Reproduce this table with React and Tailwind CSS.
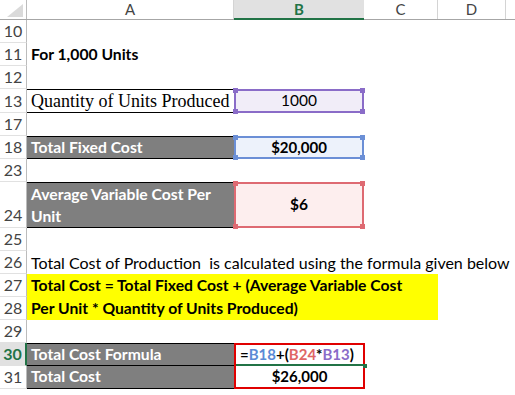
import React from 'react'

const font = { fontFamily: 'Lato, "Open Sans", sans-serif' }

function Handle({ className }) {
  return <div className={`absolute w-[5px] h-[5px] ${className}`} />
}

function RowNum({ n, h = 'h-[23px]', active = false, align = 'items-center' }) {
  return (
    <div
      className={`w-[27px] shrink-0 ${h} flex ${align} justify-center border-b border-[#e1e1e1] ${
        active ? 'bg-[#e1e1e1] text-[#217346] font-bold border-r-2 border-r-[#217346]' : 'border-r border-r-[#bcbcbc] text-[#444]'
      } text-[16px]`}
    >
      {n}
    </div>
  )
}

function Row({ n, h = 'h-[23px]', active, numAlign, children }) {
  return (
    <div className={`flex ${h}`}>
      <RowNum n={n} h={h} active={active} align={numAlign} />
      {children}
    </div>
  )
}

export default function App() {
  return (
    <div className="w-[515px] h-[395px] overflow-hidden bg-white text-black" style={font}>
      {/* column headers */}
      <div className="flex h-[20px] border-b border-[#a6a6a6] text-[15px] text-[#444]">
        <div className="w-[27px] shrink-0 border-r border-[#bcbcbc] relative">
          <svg className="absolute left-[7px] top-[4px]" width="16" height="13">
            <polygon points="16,0 16,13 0,13" fill="#dadada" />
          </svg>
        </div>
        <div className="w-[207px] shrink-0 flex items-center justify-center border-r border-[#d4d4d4]">A</div>
        <div className="w-[130px] shrink-0 flex items-center justify-center bg-[#e1e1e1] border-b-2 border-[#217346] text-[#217346] font-bold -mb-px">
          B
        </div>
        <div className="w-[74px] shrink-0 flex items-center justify-center border-r border-[#d4d4d4]">C</div>
        <div className="w-[68px] shrink-0 flex items-center justify-center border-r border-[#d4d4d4]">D</div>
        <div className="flex-1" />
      </div>

      <Row n="10" />
      <Row n="11">
        <div className="pl-[4px] flex items-center font-bold text-[15.7px] whitespace-nowrap">For 1,000 Units</div>
      </Row>
      <Row n="12" />
      <Row n="13" h="h-[24px]">
        <div className="w-[207px] shrink-0 border-y border-black flex items-center pl-[4px] whitespace-nowrap text-[18px]" style={{ fontFamily: '"Liberation Serif", serif' }}>
          Quantity of Units Produced
        </div>
        <div className="relative w-[130px] shrink-0 bg-[#f1edf8] border-2 border-[#8a6cc8] flex items-center justify-center text-[15.5px]">
          1000
          <Handle className="bg-[#8a6cc8] -left-[3px] -top-[3px]" />
          <Handle className="bg-[#8a6cc8] -right-[3px] -top-[3px]" />
          <Handle className="bg-[#8a6cc8] -left-[3px] -bottom-[3px]" />
          <Handle className="bg-[#8a6cc8] -right-[3px] -bottom-[3px]" />
        </div>
      </Row>
      <Row n="17" />
      <Row n="18">
        <div className="w-[207px] shrink-0 bg-[#7f7f7f] border-y border-black flex items-center pl-[4px] text-white font-bold text-[15.7px]">
          Total Fixed Cost
        </div>
        <div className="relative w-[130px] shrink-0 bg-[#edf2fb] border-2 border-[#6b8fd6] flex items-center justify-center font-bold text-[15px]">
          $20,000
          <Handle className="bg-[#6b8fd6] -left-[3px] -top-[3px]" />
          <Handle className="bg-[#6b8fd6] -right-[3px] -top-[3px]" />
          <Handle className="bg-[#6b8fd6] -left-[3px] -bottom-[3px]" />
          <Handle className="bg-[#6b8fd6] -right-[3px] -bottom-[3px]" />
        </div>
      </Row>
      <Row n="23" />
      <Row n="24" h="h-[46px]" numAlign="items-end">
        <div className="w-[207px] shrink-0 bg-[#7f7f7f] border-y border-black flex flex-col justify-center pl-[4px] text-white font-bold text-[15.7px] leading-[22px]">
          <span>Average Variable Cost Per</span>
          <span>Unit</span>
        </div>
        <div className="relative w-[130px] shrink-0 bg-[#fdeeee] border-2 border-[#de6a72] flex items-center justify-center font-bold text-[15.5px]">
          $6
          <Handle className="bg-[#de6a72] -left-[3px] -top-[3px]" />
          <Handle className="bg-[#de6a72] -right-[3px] -top-[3px]" />
          <Handle className="bg-[#de6a72] -left-[3px] -bottom-[3px]" />
          <Handle className="bg-[#de6a72] -right-[3px] -bottom-[3px]" />
        </div>
      </Row>
      <Row n="25" />
      <Row n="26">
        <div className="pl-[4px] flex items-center text-[16px] whitespace-nowrap">
          Total Cost of Production&nbsp; is calculated using the formula given below
        </div>
      </Row>

      {/* merged yellow block rows 27-28 */}
      <div className="flex">
        <div className="flex flex-col">
          <RowNum n="27" />
          <RowNum n="28" />
        </div>
        <div className="w-[411px] shrink-0 bg-[#ffff00] pl-[4px] font-bold text-[15.7px] leading-[23px]">
          <div>Total Cost = Total Fixed Cost + (Average Variable Cost</div>
          <div>Per Unit * Quantity of Units Produced)</div>
        </div>
      </div>

      <Row n="29" />

      {/* rows 30-31 */}
      <div className="flex">
        <div className="flex flex-col">
          <RowNum n="30" active />
          <RowNum n="31" />
        </div>
        <div className="w-[207px] shrink-0 flex flex-col text-white font-bold text-[15.7px]">
          <div className="h-[23px] bg-[#7f7f7f] border-y border-black flex items-center pl-[4px]">Total Cost Formula</div>
          <div className="h-[23px] bg-[#7f7f7f] border-b border-black flex items-center pl-[4px]">Total Cost</div>
        </div>
        <div className="relative w-[131px] shrink-0 border-2 border-[#e00000] flex flex-col font-bold text-[15px]">
          <div className="h-[21px] border-b-2 border-[#217346] flex items-center pl-[4px] whitespace-nowrap">
            <span>=</span>
            <span className="text-[#5b8bd6]">B18</span>
            <span>+(</span>
            <span className="text-[#e06666]">B24</span>
            <span>*</span>
            <span className="text-[#8a6cc8]">B13</span>
            <span>)</span>
          </div>
          <div className="h-[21px] flex items-center justify-center">$26,000</div>
          <div className="absolute -right-[4px] top-[19px] w-[4px] h-[4px] bg-[#217346]" />
        </div>
      </div>
    </div>
  )
}
